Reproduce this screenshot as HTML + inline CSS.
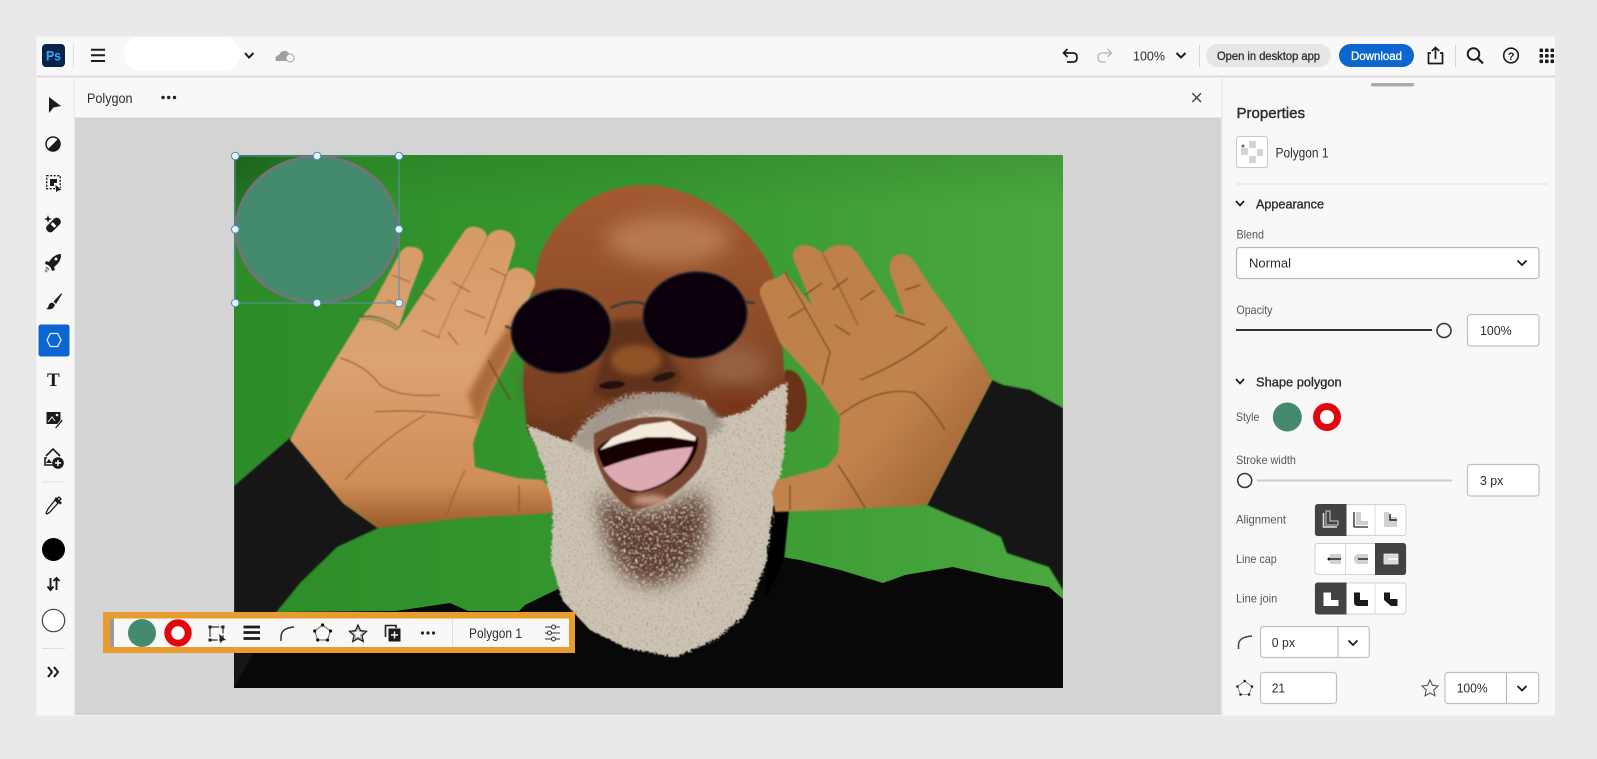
<!DOCTYPE html>
<html lang="en"><head><meta charset="utf-8"><title>Photoshop Polygon</title>
<style>
html,body{margin:0;padding:0;background:#e9e9e9;width:1597px;height:759px;overflow:hidden}
svg{display:block}
text{font-family:"Liberation Sans",sans-serif;fill:#2c2c2c}
.t{font-size:13px}.s{font-size:12px;fill:#555}.b{font-size:13px;stroke:#2c2c2c;stroke-width:.35}
.i{fill:none;stroke:#1b1b1b;stroke-width:1.5}
</style></head><body>
<svg width="1597" height="759" viewBox="0 0 1597 759" xmlns="http://www.w3.org/2000/svg">
<defs>
<clipPath id="ph"><rect x="234" y="155" width="829" height="533"/></clipPath>
<linearGradient id="gr" x1="0" x2="1" y1="0" y2="0"><stop offset="0" stop-color="#2c8c28"/><stop offset=".5" stop-color="#379830"/><stop offset="1" stop-color="#4aa83f"/></linearGradient>
<linearGradient id="grt" x1="0" x2="0" y1="0" y2="1"><stop offset="0" stop-color="#1c5a1c" stop-opacity=".18"/><stop offset=".1" stop-color="#1c5a1c" stop-opacity="0"/></linearGradient>
<radialGradient id="tl" cx="0" cy="0" r="1"><stop offset="0" stop-color="#15551a" stop-opacity=".7"/><stop offset="1" stop-color="#15551a" stop-opacity="0"/></radialGradient>
<linearGradient id="sk" x1="0" x2="0" y1="0" y2="1"><stop offset="0" stop-color="#d69a68"/><stop offset=".45" stop-color="#dba272"/><stop offset=".85" stop-color="#cf8d57"/><stop offset="1" stop-color="#9c5a2a"/></linearGradient>
<linearGradient id="sk2" x1="0" x2="1" y1="0" y2="1"><stop offset="0" stop-color="#bd7f48"/><stop offset=".6" stop-color="#c0834c"/><stop offset="1" stop-color="#94572a"/></linearGradient>
<linearGradient id="head" x1="0" x2="0" y1="0" y2="1"><stop offset="0" stop-color="#a35a30"/><stop offset=".5" stop-color="#8c4c28"/><stop offset="1" stop-color="#5c2d18"/></linearGradient>
<filter id="soft" x="-5%" y="-5%" width="110%" height="110%"><feGaussianBlur stdDeviation=".7"/></filter>
<filter id="bl6" x="-50%" y="-50%" width="200%" height="200%"><feGaussianBlur stdDeviation="10"/></filter>
<filter id="bl3" x="-50%" y="-50%" width="200%" height="200%"><feGaussianBlur stdDeviation="3"/></filter>
<filter id="fuzz" x="-5%" y="-5%" width="110%" height="110%">
<feTurbulence type="fractalNoise" baseFrequency=".45" numOctaves="2" seed="4" result="n"/>
<feDisplacementMap in="SourceGraphic" in2="n" scale="7" result="d"/>
<feColorMatrix in="n" type="matrix" values="0 0 0 0 .3 0 0 0 0 .26 0 0 0 0 .22 1.6 1.6 0 0 -1.62" result="sp"/>
<feComposite in="sp" in2="d" operator="atop" result="c"/>
<feGaussianBlur in="c" stdDeviation=".45"/>
</filter>
<filter id="fuzz2" x="-10%" y="-20%" width="120%" height="140%">
<feGaussianBlur in="SourceGraphic" stdDeviation="2" result="g0"/>
<feTurbulence type="fractalNoise" baseFrequency=".4" numOctaves="2" seed="7" result="n"/>
<feDisplacementMap in="g0" in2="n" scale="12" result="d"/>
<feColorMatrix in="n" type="matrix" values="0 0 0 0 .32 0 0 0 0 .27 0 0 0 0 .24 2.4 2.4 0 0 -2.4" result="sp"/>
<feComposite in="sp" in2="d" operator="atop" result="c"/>
<feGaussianBlur in="c" stdDeviation=".4"/>
</filter>
<filter id="spk" x="-20%" y="-20%" width="140%" height="140%">
<feGaussianBlur in="SourceGraphic" stdDeviation="9" result="g"/>
<feTurbulence type="fractalNoise" baseFrequency=".42" numOctaves="2" seed="9" result="n"/>
<feColorMatrix in="n" type="matrix" values="0 0 0 0 .72 0 0 0 0 .66 0 0 0 0 .58 2.2 2.2 0 0 -2.3" result="sp"/>
<feComposite in="sp" in2="g" operator="atop" result="c"/>
<feGaussianBlur in="c" stdDeviation=".5"/>
</filter>
</defs>

<rect width="1597" height="759" fill="#e9e9e9"/>
<!-- app shell -->
<rect x="36.5" y="36.5" width="1518.5" height="679" fill="#f8f8f8"/>
<rect x="37" y="75.5" width="1518" height="2" fill="#dcdcdc"/>
<rect x="75" y="117.5" width="1147" height="598" fill="#d4d4d4"/>
<rect x="73.5" y="77" width="1.5" height="639" fill="#ececec"/>
<rect x="1221" y="77" width="2" height="639" fill="#ececec"/>
<rect x="37" y="715" width="1518" height="1" fill="#f2f2f2"/>

<!-- PHOTO -->
<g clip-path="url(#ph)">
<rect x="234" y="155" width="829" height="533" fill="url(#gr)"/>
<rect x="234" y="155" width="829" height="533" fill="url(#grt)"/>
<path d="M278 612L396 611L430 606L450 603L468 611L519 611L525 605L560 588L600 612L782 557L800 560L840 570L883 583L905 575L953 567L1000 578L1049 587L1063 599V688H234V640Z" fill="#080808"/>
<g filter="url(#soft)">
<path d="M234 486L290 438L343 503L378 528L337 547L300 583L278 610L268 625L234 688Z" fill="#161614"/>
<path d="M992 380L1003 385L1030 390L1063 408V590L1049 567L1007 553L1001 537L975 525L950 515L927 505Z" fill="#191917"/>
<path d="M768 500H790L784 560L765 600Z" fill="#060606"/>
<!-- ear + head -->
<path d="M785 370Q800 368 806 392Q810 420 793 432L780 430Z" fill="#6b3018"/>
<path d="M537 267C545 225 590 185 643 185C695 185 750 222 773 273L782 340L786 400L770 450L560 480L527 430L523 383L527 320Z" fill="url(#head)"/>
<ellipse cx="668" cy="240" rx="62" ry="24" fill="#c58a62" filter="url(#bl6)" opacity=".7"/>
<ellipse cx="735" cy="368" rx="34" ry="22" fill="#a5745a" filter="url(#bl6)" opacity=".6"/>
<ellipse cx="550" cy="385" rx="22" ry="25" fill="#7c4124" filter="url(#bl6)"/>
<ellipse cx="735" cy="405" rx="30" ry="14" fill="#7a361a" filter="url(#bl6)"/>
<!-- nose -->
<path d="M612 320L662 318L672 360L684 378L668 396L640 392L610 402L592 392L600 365Z" fill="#60321a" filter="url(#bl3)"/>
<ellipse cx="636" cy="360" rx="25" ry="15" fill="#8f5328" filter="url(#bl3)"/>
<ellipse cx="612" cy="385" rx="13" ry="4" fill="#251009" transform="rotate(-5 612 385)"/>
<ellipse cx="664" cy="377" rx="12" ry="4" fill="#2a120a" transform="rotate(-15 664 377)"/>
</g>
<!-- beard -->
<path d="M527 425L545 470L553 520L551 560L562 600L590 630L626 648L675 657L715 640L745 615L766 563L773 510L784 455L788 382L775 388L745 412L712 420L705 400L640 402L590 420L570 442Z" fill="#cdc4b4" filter="url(#fuzz)"/>
<path d="M582 448Q600 414 645 402Q690 396 716 432" fill="none" stroke="#a39a8d" stroke-width="22" filter="url(#fuzz2)"/>
<path d="M600 490Q640 530 700 490Q720 530 690 570Q650 600 620 570Q595 530 600 490Z" fill="#5f3a2a" filter="url(#spk)"/>
<g filter="url(#soft)">
<path d="M594 434Q645 404 705 427Q711 445 700 468Q670 506 632 510Q604 492 594 452Z" fill="#7a4630"/>
<ellipse cx="650" cy="500" rx="18" ry="5" fill="#c49a84" filter="url(#bl3)"/>
<path d="M597 450Q600 440 640 428Q680 425 698 437Q700 455 680 475Q650 495 630 492Q605 480 597 450Z" fill="#180604"/>
<path d="M600 450L612 438L640 425L670 421L696 437L695 441L670 437L647 437L620 443Z" fill="#f4eadb"/>
<path d="M603 468Q650 450 693 447Q682 482 640 491Q618 490 603 468Z" fill="#dcaab0"/>
<!-- left hand -->
<path d="M290 440C305 410 320 385 337 357L358 323C365 312 372 306 373 303L400 253C404 247 408 246 412 247C420 247 424 252 423 259L410 293L398 330L443 263L463 233C467 227 471 226 476 227C483 228 487 232 487 238C490 232 496 229 502 230C511 231 516 238 515 246L507 273C511 268 516 267 521 268C530 270 536 277 535 285L520 317L513 350L490 393L473 443L475 467L517 478L543 480C550 490 553 500 552 513L520 515L463 518L378 528L343 503Z" fill="url(#sk)"/>
<path d="M492 350L520 310L513 350L490 393L478 425L468 395Z" fill="#ab6a3b" filter="url(#bl3)"/>
<g fill="none" stroke="#9a5a30" stroke-width="1.2">
<path d="M340 358Q365 365 380 385Q400 398 440 395"/>
<path d="M375 412Q420 408 475 418"/><path d="M425 415Q380 440 345 480"/>
<path d="M487 238L452 305L438 338" stroke="#b97c49"/>
<path d="M507 273L485 335" stroke="#a9683a"/>
<path d="M458 345L448 332M422 330L440 338M417 290L435 300M452 282L470 292M392 275L410 282M490 268L506 276M465 310L485 318M398 305L387 300"/>
<path d="M488 360L510 400" stroke="#6d3a1a"/>
<path d="M519 485V512" stroke="#8f4f24"/><path d="M465 470Q455 490 447 515"/>
</g>
<path d="M359 318Q380 315 398 329" fill="none" stroke="#6a5a3a" stroke-width="4"/>
<path d="M359 319Q380 315 398 329" fill="none" stroke="#c9b06a" stroke-width="1.5"/>
<!-- right hand -->
<path d="M770 280C763 282 759 288 760 295L780 343L820 387L840 417L838 453L827 467L777 480L772 493L775 512L833 510L927 505L992 380L950 313L933 290L912 258C906 253 896 253 892 258C889 263 889 268 890 273L905 315L897 313L860 257C855 248 848 244 840 245C832 245 826 249 823 254C820 250 812 245 803 245C796 246 792 251 793 258L813 307L785 272C780 277 775 279 770 280Z" fill="url(#sk2)"/>
<g fill="none" stroke="#6e3a18" stroke-width="1.2">
<path d="M860 380Q910 360 947 327"/><path d="M840 415Q880 385 915 393Q930 405 945 430"/>
<path d="M785 272L830 352L822 385"/><path d="M823 254L858 325" stroke="#8d5228"/>
<path d="M805 295L822 283M832 290L848 278M860 300L875 290M905 290L920 285M788 318L805 308M835 325L850 335M895 315L925 325"/>
<path d="M838 465Q855 490 865 508M790 485V510"/>
</g>
<!-- glasses -->
<path d="M505 326L520 332M611 308Q630 298 648 305M745 302L755 303" fill="none" stroke="#3a3a3a" stroke-width="2.5"/>
<ellipse cx="561" cy="331" rx="50" ry="42" fill="#07060a" stroke="#2c2a2c" stroke-width="1.5" transform="rotate(-6 561 331)"/>
<ellipse cx="695" cy="315" rx="52" ry="43" fill="#07060a" stroke="#2c2a2c" stroke-width="1.5" transform="rotate(-6 695 315)"/>
</g>
<!-- polygon shape -->
<rect x="234" y="155" width="120" height="110" fill="url(#tl)"/>
<ellipse cx="317" cy="229.5" rx="81" ry="73" fill="#448b6d" stroke="#7a7079" stroke-width="2.6"/>
<rect x="235" y="156" width="164" height="147" fill="none" stroke="#5d8fae" stroke-width="1"/>
</g>
<g fill="#e4f5ff" stroke="#4c8db5" stroke-width="1">
<circle cx="235.3" cy="156" r="3.8"/><circle cx="317" cy="156" r="3.8"/><circle cx="399" cy="156" r="3.8"/>
<circle cx="235.3" cy="229.3" r="3.8"/><circle cx="399" cy="229.3" r="3.8"/>
<circle cx="235.3" cy="303" r="3.8"/><circle cx="317" cy="303" r="3.8"/><circle cx="399" cy="303" r="3.8"/>
</g>

<!-- TOP BAR -->
<rect x="42" y="44" width="23" height="23" rx="4" fill="#06244a"/>
<text x="46" y="60.5" style="font-size:13.5px;font-weight:bold;fill:#31a8ff" textLength="15" lengthAdjust="spacingAndGlyphs">Ps</text>
<rect x="73" y="44" width="1" height="23" fill="#dcdcdc"/>
<path d="M91 49.7H105M91 55.3H105M91 61H105" class="i" style="stroke-width:2"/>
<rect x="124" y="37" width="116" height="34" rx="17" fill="#fff"/>
<path d="M245 53L249 57.5L253.5 53" class="i" style="stroke-width:2"/>
<path d="M276 61Q274 56 279 55Q281 50 286 51Q289 52 290 56H291V61Z" fill="#a0a0a0"/><circle cx="290" cy="58" r="4" fill="#f8f8f8" stroke="#a0a0a0"/>
<path d="M1064 53H1073Q1077 53 1077 57.5Q1077 62 1073 62H1067M1067.5 49L1063.5 53L1067.5 57" class="i" style="stroke-width:1.7"/>
<path d="M1111 53H1102Q1098 53 1098 57.5Q1098 62 1102 62H1106M1107.5 49L1111.5 53L1107.5 57" class="i" style="stroke:#b5b5b5;stroke-width:1.3"/>
<text x="1133" y="60.5" class="t" textLength="32" lengthAdjust="spacingAndGlyphs">100%</text>
<path d="M1176.5 53L1181 57.5L1185.5 53" class="i" style="stroke-width:2"/>
<rect x="1199" y="45" width="1" height="22" fill="#d5d5d5"/>
<rect x="1206" y="44" width="125" height="23" rx="11.5" fill="#e6e6e6"/>
<text x="1217" y="60" style="font-size:12px;stroke:#2c2c2c;stroke-width:.3" textLength="103" lengthAdjust="spacingAndGlyphs">Open in desktop app</text>
<rect x="1339" y="44" width="75" height="23" rx="11.5" fill="#0d66d0"/>
<text x="1351" y="60" style="font-size:12px;fill:#fff;stroke:#fff;stroke-width:.3" textLength="51" lengthAdjust="spacingAndGlyphs">Download</text>
<path d="M1431 53H1428.5V63.5H1442.5V53H1440M1435.5 59V48M1431.8 51L1435.5 47.5L1439.2 51" class="i" style="stroke-width:1.7"/>
<rect x="1455" y="45" width="1" height="22" fill="#d5d5d5"/>
<circle cx="1473.5" cy="54" r="5.8" class="i" style="stroke-width:1.9"/><path d="M1478 58.5L1483 63.5" class="i" style="stroke-width:2.2"/>
<circle cx="1511" cy="55.5" r="7.3" class="i" style="stroke-width:1.6"/>
<text x="1507.7" y="60" style="font-size:11px;font-weight:bold;fill:#1b1b1b">?</text>
<g fill="#1b1b1b"><rect x="1539.5" y="48.5" width="3.6" height="3.6" rx="1"/><rect x="1545" y="48.5" width="3.6" height="3.6" rx="1"/><rect x="1550.5" y="48.5" width="3.6" height="3.6" rx="1"/><rect x="1539.5" y="54" width="3.6" height="3.6" rx="1"/><rect x="1545" y="54" width="3.6" height="3.6" rx="1"/><rect x="1550.5" y="54" width="3.6" height="3.6" rx="1"/><rect x="1539.5" y="59.5" width="3.6" height="3.6" rx="1"/><rect x="1545" y="59.5" width="3.6" height="3.6" rx="1"/><rect x="1550.5" y="59.5" width="3.6" height="3.6" rx="1"/></g>

<!-- TAB BAR -->
<text x="87" y="103" class="t" style="font-size:13.5px" textLength="45.5" lengthAdjust="spacingAndGlyphs">Polygon</text>
<g fill="#222"><circle cx="163" cy="97.5" r="1.7"/><circle cx="168.7" cy="97.5" r="1.7"/><circle cx="174.5" cy="97.5" r="1.7"/></g>
<path d="M1192.3 93.3L1201 102M1201 93.3L1192.3 102" class="i" style="stroke:#444;stroke-width:1.4"/>

<!-- LEFT TOOLS -->
<path d="M49 97L61 106L53.5 107.5L49 113Z" fill="#1b1b1b"/>
<circle cx="53" cy="144" r="7" fill="#fff" stroke="#1b1b1b" stroke-width="1.5"/><path d="M58 139A7 7 0 0 1 48 149Z" fill="#1b1b1b"/>
<rect x="46.7" y="175.7" width="13.5" height="13" fill="none" stroke="#1b1b1b" stroke-width="1.4" stroke-dasharray="2 1.5"/><path d="M50 179H57V183H54V186H50Z" fill="#1b1b1b"/><path d="M55 184L62 190L58 191L56 193Z" fill="#1b1b1b" stroke="#f8f8f8" stroke-width=".6"/>
<g transform="rotate(-45 53.5 225)"><rect x="45" y="221" width="17" height="8" rx="3.5" fill="#1b1b1b"/><rect x="52" y="222.5" width="3" height="5" fill="#f8f8f8"/></g><path d="M48 215L49 218L52 219L49 220L48 223L47 220L44 219L47 218Z" fill="#1b1b1b"/>
<path d="M61 255Q61 254 60 254Q53 255 49 262L46 261L45 264L48 265L51 268L52 271L55 270L54 267Q61 262 61 255Z" fill="#1b1b1b"/><circle cx="56" cy="259" r="1.5" fill="#f8f8f8"/><path d="M46 267L49 270M45 270L47 272" class="i" style="stroke:#888;stroke-width:2"/>
<path d="M61.5 293L53.5 301.5L56 304L62 294ZM52.5 302.5Q49 303 48.5 306Q48 308 46 309Q51 310 53 308Q55 306 54.8 304.5Z" fill="#1b1b1b"/>
<rect x="38.5" y="324.5" width="31" height="32" rx="2.5" fill="#0d66d0"/>
<path d="M47 340L50.3 333.5H57.7L61 340L57.7 346.5H50.3Z" fill="none" stroke="#dcebff" stroke-width="1.3"/>
<text x="47" y="386" style="font-family:'Liberation Serif',serif;font-size:19px;font-weight:bold;fill:#1b1b1b">T</text>
<rect x="46.5" y="412" width="14" height="12" fill="#1b1b1b"/><path d="M48 422L52 417L55 421" fill="none" stroke="#f8f8f8"/><circle cx="57" cy="415" r="1.3" fill="#f8f8f8"/><path d="M62 419L56 426L54 429L57 428L63 421Z" fill="#1b1b1b" stroke="#f8f8f8" stroke-width=".7"/>
<path d="M46 456L53 449L60 456M47 458H45V465H53" fill="none" stroke="#1b1b1b" stroke-width="1.6"/><path d="M46 463L49 459L52 463Z" fill="#1b1b1b"/><circle cx="58" cy="463" r="5.8" fill="#1b1b1b"/><path d="M58 460V466M55 463H61" stroke="#fff" stroke-width="1.4"/>
<rect x="42" y="481.5" width="23" height="1" fill="#dedede"/>
<path d="M59 497L61 499L58 502L56 500ZM55 500L58 503L50 512L47 514L46 513L48 509Z" fill="#f8f8f8" stroke="#1b1b1b" stroke-width="1.3"/><path d="M56 497L62 503L60 504.5L54.5 499Z" fill="#1b1b1b"/>
<circle cx="53.5" cy="549.5" r="11.5" fill="#000"/>
<path d="M50.5 578V590M47.5 586.5L50.5 590L53.5 586.5M56.5 590V578M53.5 581L56.5 578L59.5 581" class="i" style="stroke-width:1.9"/>
<circle cx="53.5" cy="620.5" r="11.2" fill="#fff" stroke="#444" stroke-width="1.2"/>
<rect x="42" y="648" width="23" height="1" fill="#dedede"/>
<path d="M48 667L52 672L48 677M54 667L58 672L54 677" class="i" style="stroke-width:2"/>

<!-- CONTEXT TOOLBAR -->
<rect x="103" y="612" width="472" height="41" fill="#e89b2e"/>
<rect x="110" y="618.5" width="459" height="28.5" fill="#f8f8f8"/>
<rect x="110" y="618.5" width="4" height="28.5" fill="#9a9a9a"/>
<circle cx="142" cy="633" r="14" fill="#448b6d"/>
<circle cx="178" cy="633" r="10.2" fill="#fff" stroke="#e2070f" stroke-width="7"/>
<rect x="210" y="627" width="13" height="13" fill="none" stroke="#333" stroke-width="1.2" stroke-dasharray="9 1.5"/><g fill="#222"><rect x="208.5" y="625.5" width="3" height="3"/><rect x="221.5" y="625.5" width="3" height="3"/><rect x="208.5" y="638.5" width="3" height="3"/></g><path d="M219 634L226 640L222.5 640.5L220.5 643.5Z" fill="#222"/>
<path d="M243.5 627H260M243.5 632.5H260M243.5 638.5H260" class="i" style="stroke-width:2.8"/>
<path d="M281 641V637Q281 628 294 627" class="i" style="stroke:#333;stroke-width:1.5"/>
<path d="M322.6 625L330.5 631L327.5 640H317.7L314.7 631Z" fill="none" stroke="#555" stroke-width=".9"/><g fill="#111"><circle cx="322.6" cy="625" r="1.6"/><circle cx="330.5" cy="631" r="1.6"/><circle cx="327.5" cy="640" r="1.6"/><circle cx="317.7" cy="640" r="1.6"/><circle cx="314.7" cy="631" r="1.6"/></g>
<path d="M358 625L360.5 630.5L366.5 631.3L362 635.5L363.3 641.5L358 638.5L352.7 641.5L354 635.5L349.5 631.3L355.5 630.5Z" fill="none" stroke="#222" stroke-width="1.3"/><path d="M358 627.5L359.5 631.5L363.5 632L360.5 635L361.3 639L358 637L354.7 639L355.5 635L352.5 632L356.5 631.5Z" fill="none" stroke="#777" stroke-width=".6"/>
<path d="M385.5 637V625.5H396V628" fill="none" stroke="#1b1b1b" stroke-width="1.6"/><rect x="388.5" y="628.5" width="12" height="13" fill="#1b1b1b"/><path d="M394.5 631.5V638.5M391 635H398" stroke="#fff" stroke-width="1.4"/>
<g fill="#222"><circle cx="422.5" cy="633" r="1.6"/><circle cx="428" cy="633" r="1.6"/><circle cx="433.5" cy="633" r="1.6"/></g>
<rect x="452" y="619" width="1" height="27" fill="#dedede"/>
<text x="469" y="638" class="t" style="font-size:13.5px" textLength="53" lengthAdjust="spacingAndGlyphs">Polygon 1</text>
<g class="i" style="stroke:#333;stroke-width:1.1" fill="none"><path d="M545 627H551M556 627H560M545 633H547M552 633H560M545 639H551M556 639H560"/><circle cx="553.5" cy="627" r="2"/><circle cx="549.5" cy="633" r="2"/><circle cx="553.5" cy="639" r="2"/></g>

<!-- PROPERTIES PANEL -->
<rect x="1371" y="83" width="43" height="3.5" rx="1.7" fill="#ababab"/>
<text x="1236.5" y="118" style="font-size:15px;stroke:#2c2c2c;stroke-width:.4" textLength="68.5" lengthAdjust="spacingAndGlyphs">Properties</text>
<rect x="1236.5" y="136.5" width="31" height="31" rx="3" fill="#fff" stroke="#c8c8c8"/>
<g fill="#d4d4d4"><rect x="1249" y="141" width="7" height="7"/><rect x="1241" y="148" width="7" height="7"/><rect x="1257" y="149" width="6" height="7"/><rect x="1249" y="156" width="7" height="7"/></g><circle cx="1243" cy="146" r="1.5" fill="#3f7f62"/>
<text x="1275.5" y="157.5" class="t" style="font-size:13.5px" textLength="53" lengthAdjust="spacingAndGlyphs">Polygon 1</text>
<rect x="1236" y="183.5" width="312" height="1" fill="#e1e1e1"/>
<path d="M1236 201L1240 205.5L1244 201" class="i" style="stroke-width:1.7"/>
<text x="1256" y="208.5" class="b" textLength="68" lengthAdjust="spacingAndGlyphs">Appearance</text>
<text x="1236.5" y="238.5" class="s" textLength="27.5" lengthAdjust="spacingAndGlyphs">Blend</text>
<rect x="1236.5" y="247.5" width="302.5" height="31" rx="3" fill="#fff" stroke="#b8b8b8" stroke-width="1.2"/>
<text x="1249" y="267.5" class="t" textLength="42" lengthAdjust="spacingAndGlyphs">Normal</text>
<path d="M1517.5 260.5L1522 265L1526.5 260.5" class="i" style="stroke-width:1.8"/>
<text x="1236.5" y="314" class="s" textLength="36" lengthAdjust="spacingAndGlyphs">Opacity</text>
<rect x="1236" y="329" width="196" height="2" fill="#333"/>
<circle cx="1444" cy="330.5" r="7" fill="#f8f8f8" stroke="#333" stroke-width="1.5"/>
<rect x="1467.5" y="314.5" width="71.5" height="31.5" rx="3" fill="#fff" stroke="#c0c0c0" stroke-width="1.2"/>
<text x="1480" y="335" class="t" textLength="31.7" lengthAdjust="spacingAndGlyphs">100%</text>
<path d="M1236 379L1240 383.5L1244 379" class="i" style="stroke-width:1.7"/>
<text x="1256" y="386.5" class="b" textLength="85.7" lengthAdjust="spacingAndGlyphs">Shape polygon</text>
<text x="1236" y="421" class="s" textLength="23.3" lengthAdjust="spacingAndGlyphs">Style</text>
<circle cx="1287.3" cy="417" r="14.5" fill="#448b6d"/>
<circle cx="1327" cy="417" r="10.5" fill="#fff" stroke="#e2070f" stroke-width="7"/>
<text x="1236" y="464" class="s" textLength="60" lengthAdjust="spacingAndGlyphs">Stroke width</text>
<rect x="1257" y="479.5" width="195" height="2" fill="#ccc"/>
<circle cx="1244.7" cy="480.5" r="7" fill="#f8f8f8" stroke="#333" stroke-width="1.5"/>
<rect x="1467.5" y="464.5" width="71.5" height="31.5" rx="3" fill="#fff" stroke="#c0c0c0" stroke-width="1.2"/>
<text x="1480" y="485" class="t" textLength="23.3" lengthAdjust="spacingAndGlyphs">3 px</text>
<text x="1236" y="523.5" class="s" textLength="50" lengthAdjust="spacingAndGlyphs">Alignment</text>
<text x="1236" y="563" class="s" textLength="40.7" lengthAdjust="spacingAndGlyphs">Line cap</text>
<text x="1236" y="602.5" class="s" textLength="41.3" lengthAdjust="spacingAndGlyphs">Line join</text>
<!-- segmented groups -->
<g>
<rect x="1315" y="504.5" width="91" height="31" rx="3" fill="#fff" stroke="#d0d0d0"/>
<path d="M1346.5 504V536H1318Q1315 536 1315 533V507Q1315 504 1318 504Z" fill="#434343"/><rect x="1374.5" y="505" width="1" height="30" fill="#d8d8d8"/>
<path d="M1323.5 513V527H1337" fill="none" stroke="#e4e4e4" stroke-width="1.5"/><path d="M1326 511H1330V521H1338V525H1326Z" fill="none" stroke="#cfcfcf"/>
<path d="M1354 527H1368M1354 527V512" fill="none" stroke="#222" stroke-width="1.3"/><path d="M1356 512H1361V521H1368V525H1356Z" fill="#d0d0d0"/>
<path d="M1384 512H1389V517H1397V527H1384Z" fill="#d0d0d0"/><path d="M1390 514V520H1397" fill="none" stroke="#222" stroke-width="1.5"/>
</g>
<g>
<rect x="1315" y="543.5" width="91" height="31" rx="3" fill="#fff" stroke="#d0d0d0"/>
<path d="M1375 543H1403Q1406 543 1406 546V572Q1406 575 1403 575H1375Z" fill="#434343"/><rect x="1345" y="544" width="1" height="30" fill="#d8d8d8"/>
<path d="M1330 554H1341V564H1330Z" fill="#d0d0d0"/><path d="M1328 559H1341" stroke="#222" stroke-width="1.5"/><circle cx="1329" cy="559" r="1.5" fill="#222"/>
<path d="M1368 554H1359Q1354 554 1354 559Q1354 564 1359 564H1368Z" fill="#d0d0d0"/><path d="M1358 559H1368" stroke="#222" stroke-width="1.5"/>
<path d="M1384 554H1398V564H1384Z" fill="#d8d8d8" stroke="#eee" stroke-width=".8"/><path d="M1388 559H1398" stroke="#fff" stroke-width="1.5"/>
</g>
<g>
<rect x="1315" y="583" width="91" height="31" rx="3" fill="#fff" stroke="#d0d0d0"/>
<path d="M1346.5 582.5V614.5H1318Q1315 614.5 1315 611.5V585.5Q1315 582.5 1318 582.5Z" fill="#434343"/><rect x="1374.5" y="583" width="1" height="31" fill="#d8d8d8"/>
<path d="M1323.5 592.5H1331V600H1338.5V606H1323.5Z" fill="#fff"/>
<path d="M1354 592.5H1360V600H1368V606H1358Q1354 606 1354 602Z" fill="#1b1b1b"/>
<path d="M1384 592.5H1390V599H1397.5V606H1391L1384 600Z" fill="#1b1b1b"/>
</g>
<path d="M1238.5 649V645Q1238.5 637 1252 636" class="i" style="stroke:#444;stroke-width:1.5"/>
<rect x="1260.5" y="626.5" width="108.8" height="31" rx="3" fill="#fff" stroke="#c0c0c0" stroke-width="1.2"/><rect x="1337.5" y="627" width="1" height="30" fill="#b5b5b5"/>
<text x="1271.7" y="647" class="t" textLength="23.3" lengthAdjust="spacingAndGlyphs">0 px</text>
<path d="M1348.5 640.5L1353 645L1357.5 640.5" class="i" style="stroke-width:1.8"/>
<path d="M1244.7 681L1252 686.5L1249 694.5H1240.5L1237.5 686.5Z" fill="none" stroke="#777" stroke-width=".8"/><g fill="#222"><circle cx="1244.7" cy="681" r="1.3"/><circle cx="1252" cy="686.5" r="1.3"/><circle cx="1249" cy="694.5" r="1.3"/><circle cx="1240.5" cy="694.5" r="1.3"/><circle cx="1237.5" cy="686.5" r="1.3"/></g>
<rect x="1260.5" y="672.5" width="76" height="31" rx="3" fill="#fff" stroke="#c0c0c0" stroke-width="1.2"/>
<text x="1271.7" y="692.5" class="t" textLength="13.3" lengthAdjust="spacingAndGlyphs">21</text>
<path d="M1430 680L1432.3 685.2L1438 686L1433.8 690L1435 695.8L1430 693L1425 695.8L1426.2 690L1422 686L1427.7 685.2Z" fill="none" stroke="#555" stroke-width="1.1"/>
<rect x="1445" y="672.5" width="93.7" height="31" rx="3" fill="#fff" stroke="#c0c0c0" stroke-width="1.2"/><rect x="1506" y="673" width="1" height="30" fill="#b5b5b5"/>
<text x="1456.7" y="692.5" class="t" textLength="31" lengthAdjust="spacingAndGlyphs">100%</text>
<path d="M1517.5 686L1522 690.5L1526.5 686" class="i" style="stroke-width:1.8"/>
</svg>
</body></html>
